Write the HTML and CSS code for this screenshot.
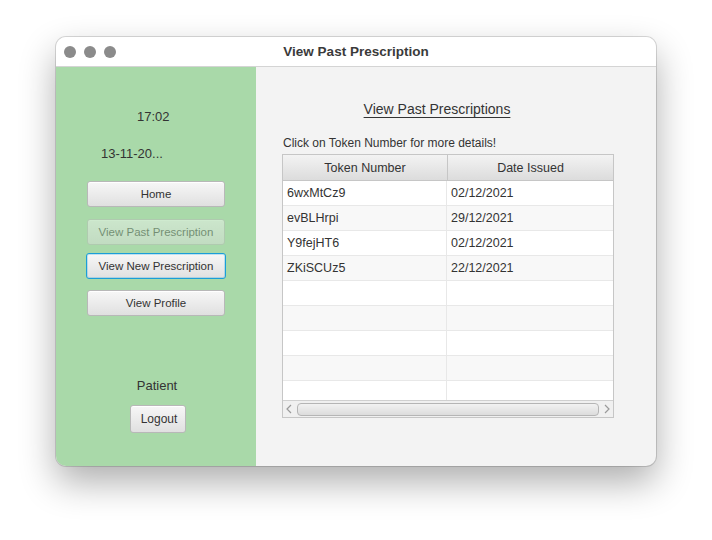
FILE: index.html
```html
<!DOCTYPE html>
<html lang="en">
<head>
    <meta charset="UTF-8">
    <link rel="stylesheet" href="styles.css">
</head>
<body>
<div class="window">
    <div class="title-bar">
        <div class="lights">
            <span class="light"></span>
            <span class="light"></span>
            <span class="light"></span>
        </div>
        <div class="title">View Past Prescription</div>
    </div>
    <div class="window-body">
        <div class="sidebar">
            <div class="clock">17:02</div>
            <div class="date">13-11-20...</div>
            <button class="fx-button side-button">Home</button>
            <button class="fx-button side-button disabled">View Past Prescription</button>
            <button class="fx-button side-button focused">View New Prescription</button>
            <button class="fx-button side-button">View Profile</button>
            <div class="role">Patient</div>
            <button class="fx-button logout">Logout</button>
        </div>
        <div class="content">
            <div class="heading">View Past Prescriptions</div>
            <div class="hint">Click on Token Number for more details!</div>
            <div class="table">
                <div class="table-head">
                    <div class="col-a">Token Number</div>
                    <div class="col-b">Date Issued</div>
                </div>
                <div class="table-rows">
                    <div class="row"><div class="col-a">6wxMtCz9</div><div class="col-b">02/12/2021</div></div>
                    <div class="row"><div class="col-a">evBLHrpi</div><div class="col-b">29/12/2021</div></div>
                    <div class="row"><div class="col-a">Y9fejHT6</div><div class="col-b">02/12/2021</div></div>
                    <div class="row"><div class="col-a">ZKiSCUz5</div><div class="col-b">22/12/2021</div></div>
                    <div class="row"><div class="col-a"></div><div class="col-b"></div></div>
                    <div class="row"><div class="col-a"></div><div class="col-b"></div></div>
                    <div class="row"><div class="col-a"></div><div class="col-b"></div></div>
                    <div class="row"><div class="col-a"></div><div class="col-b"></div></div>
                    <div class="row last"><div class="col-a"></div><div class="col-b"></div></div>
                </div>
                <div class="scrollbar">
                    <svg class="arrow" width="12" height="16" viewBox="0 0 12 16"><path d="M8 4 L4 8 L8 12" fill="none" stroke="#9a9a9a" stroke-width="1.2"/></svg>
                    <div class="thumb"></div>
                    <svg class="arrow" width="12" height="16" viewBox="0 0 12 16"><path d="M4 4 L8 8 L4 12" fill="none" stroke="#9a9a9a" stroke-width="1.2"/></svg>
                </div>
            </div>
        </div>
    </div>
</div>
</body>
</html>
```

FILE: styles.css
```css
body {
    margin: 0;
    padding: 37px 0 74px 56px;
    background-color: #ffffff;
    font-family: "Liberation Sans", Arial, sans-serif;
    color: #333333;
}

.window {
    width: 600px;
    height: 429px;
    border-radius: 10px;
    overflow: hidden;
    background-color: #f3f3f3;
    box-shadow: 0 16px 36px rgba(0, 0, 0, 0.32), 0 0 0 1px rgba(0, 0, 0, 0.14);
    display: flex;
    flex-direction: column;
}

.title-bar {
    position: relative;
    height: 29px;
    flex: none;
    background-color: #ffffff;
    border-bottom: 1px solid #d4d4d4;
    display: flex;
    align-items: center;
    justify-content: center;
}

.lights {
    position: absolute;
    left: 8px;
    top: 9px;
    display: flex;
    gap: 8px;
}

.light {
    width: 12px;
    height: 12px;
    border-radius: 50%;
    background-color: #8b8b8b;
}

.title {
    font-weight: bold;
    font-size: 13.5px;
    color: #3a3a3a;
}

.window-body {
    flex: 1;
    display: flex;
}

.sidebar {
    width: 200px;
    flex: none;
    background-color: #a9d9a9;
    display: flex;
    flex-direction: column;
    align-items: center;
}

.clock {
    align-self: flex-start;
    margin: 42px 0 0 81px;
    font-size: 13px;
    line-height: 16px;
}

.date {
    align-self: flex-start;
    margin: 21px 0 0 45px;
    font-size: 13px;
    line-height: 16px;
}

.fx-button {
    font-family: "Liberation Sans", Arial, sans-serif;
    font-size: 11.5px;
    color: #333333;
    background: linear-gradient(#f7f7f7, #e0e0e0);
    border: 1px solid #b8b8b8;
    border-radius: 3px;
    box-shadow: inset 0 1px 0 #ffffff;
    padding: 0;
}

.side-button {
    width: 138px;
    height: 26px;
}

.side-button:nth-of-type(1) {
    margin-top: 19px;
}

.side-button:nth-of-type(2) {
    margin-top: 12px;
}

.side-button:nth-of-type(3) {
    margin-top: 8px;
}

.side-button:nth-of-type(4) {
    margin-top: 11px;
}

.disabled {
    opacity: 0.45;
}

.focused {
    width: 140px;
    border: 1px solid #1a9ed8;
    box-shadow: inset 0 0 0 1px rgba(26, 158, 216, 0.25);
}

.role {
    margin-top: 62px;
    font-size: 13px;
    line-height: 16px;
    padding-left: 2px;
}

.logout {
    margin-top: 11px;
    width: 56px;
    height: 28px;
    font-size: 12px;
    padding-left: 2px;
    align-self: flex-start;
    margin-left: 74px;
}

.content {
    flex: 1;
    padding: 0 42px 0 26px;
}

.heading {
    margin-top: 34px;
    text-align: center;
    font-size: 14px;
    line-height: 17px;
    text-decoration: underline;
    text-underline-offset: 3px;
    padding-right: 22px;
}

.hint {
    margin-top: 17px;
    font-size: 12px;
    line-height: 16px;
    padding-left: 1px;
}

.table {
    margin-top: 3px;
    width: 330px;
    border: 1px solid #c6c6c6;
    background-color: #ffffff;
}

.table-head {
    display: flex;
    height: 25px;
    background: linear-gradient(#f3f3f3, #dcdcdc);
    border-bottom: 1px solid #c6c6c6;
    font-size: 12.5px;
    line-height: 26px;
    text-align: center;
}

.table-head .col-a {
    border-right: 1px solid #c6c6c6;
}

.col-a {
    width: 164px;
    flex: none;
}

.col-b {
    flex: 1;
}

.row {
    display: flex;
    height: 24px;
    border-bottom: 1px solid #e8e8e8;
    font-size: 12.5px;
    line-height: 25px;
}

.row:nth-child(even) {
    background-color: #f8f8f8;
}

.row .col-a {
    border-right: 1px solid #e8e8e8;
    padding-left: 4px;
    box-sizing: border-box;
}

.row .col-b {
    padding-left: 4px;
}

.row.last {
    height: 19px;
    border-bottom: none;
}

.scrollbar {
    height: 16px;
    display: flex;
    align-items: center;
    background-color: #f0f0f0;
    border-top: 1px solid #d0d0d0;
}

.arrow {
    flex: none;
}

.thumb {
    flex: 1;
    height: 11px;
    margin: 0 2px;
    border: 1px solid #b5b5b5;
    border-radius: 4px;
    background: linear-gradient(#f2f2f2, #dcdcdc);
}
```
